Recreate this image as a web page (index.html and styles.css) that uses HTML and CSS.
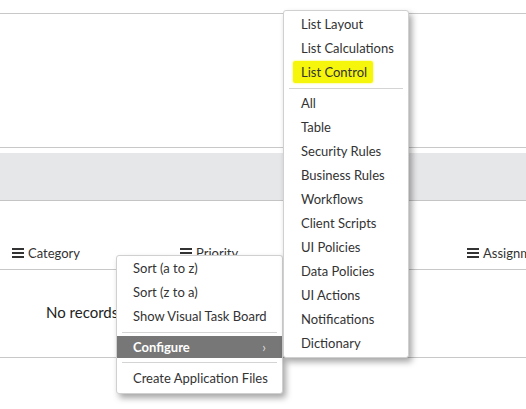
FILE: index.html
```html
<!DOCTYPE html>
<html lang="en">
<head>
    <meta charset="UTF-8">
    <title>List Context Menu</title>
    <link rel="stylesheet" href="styles.css">
</head>
<body>
    <div class="page">
        <div class="top-bar"></div>
        <div class="blank-area"></div>
        <div class="band"></div>
        <div class="list-head">
            <div class="col col-category"><span class="burger"><i></i><i></i><i></i></span>Category</div>
            <div class="col col-priority"><span class="burger"><i></i><i></i><i></i></span>Priority</div>
            <div class="col col-assign"><span class="burger"><i></i><i></i><i></i></span>Assignment group</div>
        </div>
        <div class="list-body">
            <div class="empty">No records to display</div>
        </div>

        <ul class="menu ctx-menu">
            <li>Sort (a to z)</li>
            <li>Sort (z to a)</li>
            <li>Show Visual Task Board</li>
            <li class="sep"></li>
            <li class="active">Configure <span class="arrow">&#8250;</span></li>
            <li class="sep"></li>
            <li>Create Application Files</li>
        </ul>

        <ul class="menu sub-menu">
            <li>List Layout</li>
            <li>List Calculations</li>
            <li><span class="marker">List Control</span></li>
            <li class="sep"></li>
            <li>All</li>
            <li>Table</li>
            <li>Security Rules</li>
            <li>Business Rules</li>
            <li>Workflows</li>
            <li>Client Scripts</li>
            <li>UI Policies</li>
            <li>Data Policies</li>
            <li>UI Actions</li>
            <li>Notifications</li>
            <li>Dictionary</li>
        </ul>
    </div>
</body>
</html>
```

FILE: styles.css
```css
body { margin: 0; font-family: Lato, "Open Sans", sans-serif; color: #333; background: #fff; }
.page { position: relative; width: 526px; height: 409px; overflow: hidden; }
.top-bar { height: 13px; border-bottom: 1px solid #c8c8c8; }
.blank-area { height: 133px; border-bottom: 1px solid #c8c8c8; }
.band { margin-top: 5px; height: 47px; background: #e6e7e9; border-bottom: 1px solid #c4c4c4; }
.list-head { display: flex; height: 68px; align-items: flex-end; border-bottom: 1px solid #c8c8c8; }
.col { display: flex; flex-shrink: 0; align-items: center; font-size: 13px; height: 32px; white-space: nowrap; }
.col-category { width: 168px; padding-left: 12px; }
.col-priority { width: 287px; }
.col-assign { flex: 1 0 auto; }
.burger { display: inline-flex; flex-direction: column; gap: 2px; width: 12px; margin-right: 4px; }
.burger i { display: block; height: 2px; background: #333; }
.list-body { height: 87px; border-bottom: 1px solid #c8c8c8; }
.empty { padding: 33px 0 0 46px; font-size: 15px; color: #222; }

.menu { position: absolute; margin: 0; padding: 4px 0; list-style: none; background: #fff; border: 1px solid #d0d0d0; border-radius: 3px; box-shadow: 3px 4px 6px rgba(0,0,0,0.35); font-size: 13px; }
.menu li { height: 24px; line-height: 24px; padding: 0 16px; white-space: nowrap; }
.menu li.sep { height: 1px; background: #d4d4d4; margin: 4px 5px 3px; padding: 0; }

.ctx-menu { left: 116px; top: 255px; width: 165px; padding: 0 0 3px; }
.ctx-menu li.active { height: 22px; line-height: 22px; background: #777; color: #fff; font-weight: bold; display: flex; justify-content: space-between; }
.arrow { font-weight: normal; color: #ddd; }

.sub-menu { left: 283px; top: 10px; width: 124px; padding: 1px 0 2px; }
.sub-menu li { padding-left: 17px; }
.sub-menu li.sep { margin: 4px 5px 2px; }
.marker { background: #f6f60c; padding: 3px 6px 3px 8px; margin-left: -8px; border-radius: 2px; box-shadow: 0 0 2px #f6f60c; }
```
